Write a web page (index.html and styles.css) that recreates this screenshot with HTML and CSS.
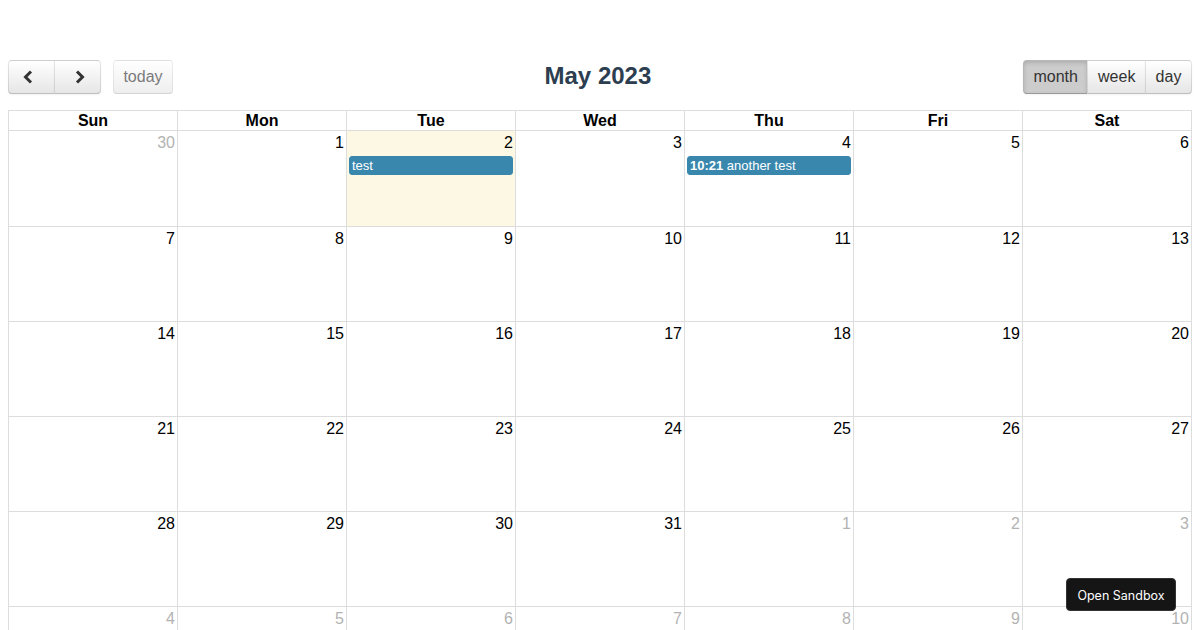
FILE: index.html
```html
<!DOCTYPE html>
<html>
<head>
<meta charset="utf-8">
<link rel="stylesheet" href="styles.css">
</head>
<body>
<div class="calendar">
  <div class="toolbar">
    <div class="tb-left">
      <div class="btn-group">
        <button class="btn btn-first btn-icon btn-prev" aria-label="prev">
          <svg width="14" height="14" viewBox="0 0 14 14"><polyline points="10,1.5 4.5,7 10,12.5" fill="none" stroke="#333" stroke-width="3" stroke-linecap="butt" stroke-linejoin="miter"/></svg>
        </button>
        <button class="btn btn-last btn-icon btn-next" aria-label="next">
          <svg width="14" height="14" viewBox="0 0 14 14"><polyline points="4,1.5 9.5,7 4,12.5" fill="none" stroke="#333" stroke-width="3" stroke-linecap="butt" stroke-linejoin="miter"/></svg>
        </button>
      </div>
      <button class="btn btn-single btn-disabled">today</button>
    </div>
    <div class="tb-center"><h2 class="title">May 2023</h2></div>
    <div class="tb-right">
      <div class="btn-group">
        <button class="btn btn-first btn-active">month</button>
        <button class="btn">week</button>
        <button class="btn btn-last">day</button>
      </div>
    </div>
  </div>

  <table class="grid">
    <thead>
      <tr>
        <th>Sun</th><th>Mon</th><th>Tue</th><th>Wed</th><th>Thu</th><th>Fri</th><th>Sat</th>
      </tr>
    </thead>
    <tbody>
      <tr class="week w1">
        <td><div class="num other">30</div></td>
        <td><div class="num">1</div></td>
        <td class="today"><div class="num">2</div><div class="event">test</div></td>
        <td><div class="num">3</div></td>
        <td><div class="num">4</div><div class="event"><b>10:21</b> another test</div></td>
        <td><div class="num">5</div></td>
        <td><div class="num">6</div></td>
      </tr>
      <tr class="week">
        <td><div class="num">7</div></td>
        <td><div class="num">8</div></td>
        <td><div class="num">9</div></td>
        <td><div class="num">10</div></td>
        <td><div class="num">11</div></td>
        <td><div class="num">12</div></td>
        <td><div class="num">13</div></td>
      </tr>
      <tr class="week">
        <td><div class="num">14</div></td>
        <td><div class="num">15</div></td>
        <td><div class="num">16</div></td>
        <td><div class="num">17</div></td>
        <td><div class="num">18</div></td>
        <td><div class="num">19</div></td>
        <td><div class="num">20</div></td>
      </tr>
      <tr class="week">
        <td><div class="num">21</div></td>
        <td><div class="num">22</div></td>
        <td><div class="num">23</div></td>
        <td><div class="num">24</div></td>
        <td><div class="num">25</div></td>
        <td><div class="num">26</div></td>
        <td><div class="num">27</div></td>
      </tr>
      <tr class="week">
        <td><div class="num">28</div></td>
        <td><div class="num">29</div></td>
        <td><div class="num">30</div></td>
        <td><div class="num">31</div></td>
        <td><div class="num other">1</div></td>
        <td><div class="num other">2</div></td>
        <td><div class="num other">3</div></td>
      </tr>
      <tr class="week">
        <td><div class="num other">4</div></td>
        <td><div class="num other">5</div></td>
        <td><div class="num other">6</div></td>
        <td><div class="num other">7</div></td>
        <td><div class="num other">8</div></td>
        <td><div class="num other">9</div></td>
        <td><div class="num other">10</div></td>
      </tr>
    </tbody>
  </table>
</div>
<a class="sandbox">Open Sandbox</a>
</body>
</html>
```
FILE: styles.css
```css
html, body {
  margin: 0;
  padding: 0;
  background: #fff;
}
body {
  font-family: "Liberation Sans", Arial, sans-serif;
  font-size: 16px;
  color: #000;
}
.calendar {
  padding: 60px 8px 0 8px;
}
.toolbar {
  display: flex;
  align-items: center;
  height: 34px;
  margin-bottom: 16px;
}
.tb-left, .tb-right {
  display: flex;
  align-items: center;
  gap: 12px;
}
.tb-center {
  flex: 1;
  text-align: center;
  padding-bottom: 2px;
}
.title {
  margin: 0;
  font-size: 24px;
  font-weight: bold;
  color: #2c3e50;
  line-height: 28px;
}
.btn-group {
  display: flex;
}
.btn {
  height: 34px;
  padding: 0 9.6px;
  margin: 0 0 0 -1px;
  font-family: "Liberation Sans", Arial, sans-serif;
  font-size: 16px;
  color: #333;
  background-color: #f5f5f5;
  background-image: linear-gradient(to bottom, #fff, #e6e6e6);
  border: 1px solid;
  border-color: rgba(0,0,0,.1) rgba(0,0,0,.1) rgba(0,0,0,.25);
  box-shadow: inset 0 1px 0 rgba(255,255,255,.2), 0 1px 2px rgba(0,0,0,.05);
  border-radius: 0;
  cursor: pointer;
  white-space: nowrap;
}
.btn-group .btn:first-child { margin-left: 0; }
.btn-first { border-radius: 4px 0 0 4px; }
.btn-last { border-radius: 0 4px 4px 0; }
.btn-single { border-radius: 4px; margin-left: 0; }
.btn-icon {
  width: 47px;
  display: flex;
  align-items: center;
  justify-content: center;
  padding: 0;
}
.btn-prev { padding-right: 7px; }
.btn-next { padding-left: 4px; }
.btn-icon svg { display: block; }
.btn-disabled {
  opacity: .65;
  box-shadow: none;
  cursor: default;
  width: 60px;
  padding: 0;
}
.btn-active {
  background-color: #ccc;
  background-image: none;
  box-shadow: inset 0 2px 4px rgba(0,0,0,.15), 0 1px 2px rgba(0,0,0,.05);
}

.grid {
  width: 100%;
  table-layout: fixed;
  border-collapse: collapse;
  border-spacing: 0;
}
.grid th, .grid td {
  border: 1px solid #ddd;
  padding: 0;
}
.grid th {
  font-weight: bold;
  text-align: center;
  height: 19px;
  line-height: 18px;
}
.grid td {
  vertical-align: top;
  height: 94px;
}
.grid .w1 td { height: 95px; }
.grid td.today {
  background: #fcf8e3;
}
.num {
  text-align: right;
  padding: 2px;
  line-height: 20px;
}
.num.other {
  color: #b3b3b3;
}
.event {
  margin: 1px 2px 0 2px;
  padding: 0 2px;
  font-size: 13px;
  line-height: 17px;
  color: #fff;
  background: #3a87ad;
  border: 1px solid #3a87ad;
  border-radius: 3px;
  white-space: nowrap;
  overflow: hidden;
}
.event b { font-weight: bold; }

.sandbox {
  position: fixed;
  right: 24px;
  bottom: 19px;
  width: 110px;
  height: 33px;
  line-height: 33px;
  text-align: center;
  background: #151515;
  color: #fff;
  border-radius: 4px;
  font-family: "Inter", "Liberation Sans", sans-serif;
  font-size: 12.5px;
  border: 1px solid #333;
  box-sizing: border-box;
}
```
